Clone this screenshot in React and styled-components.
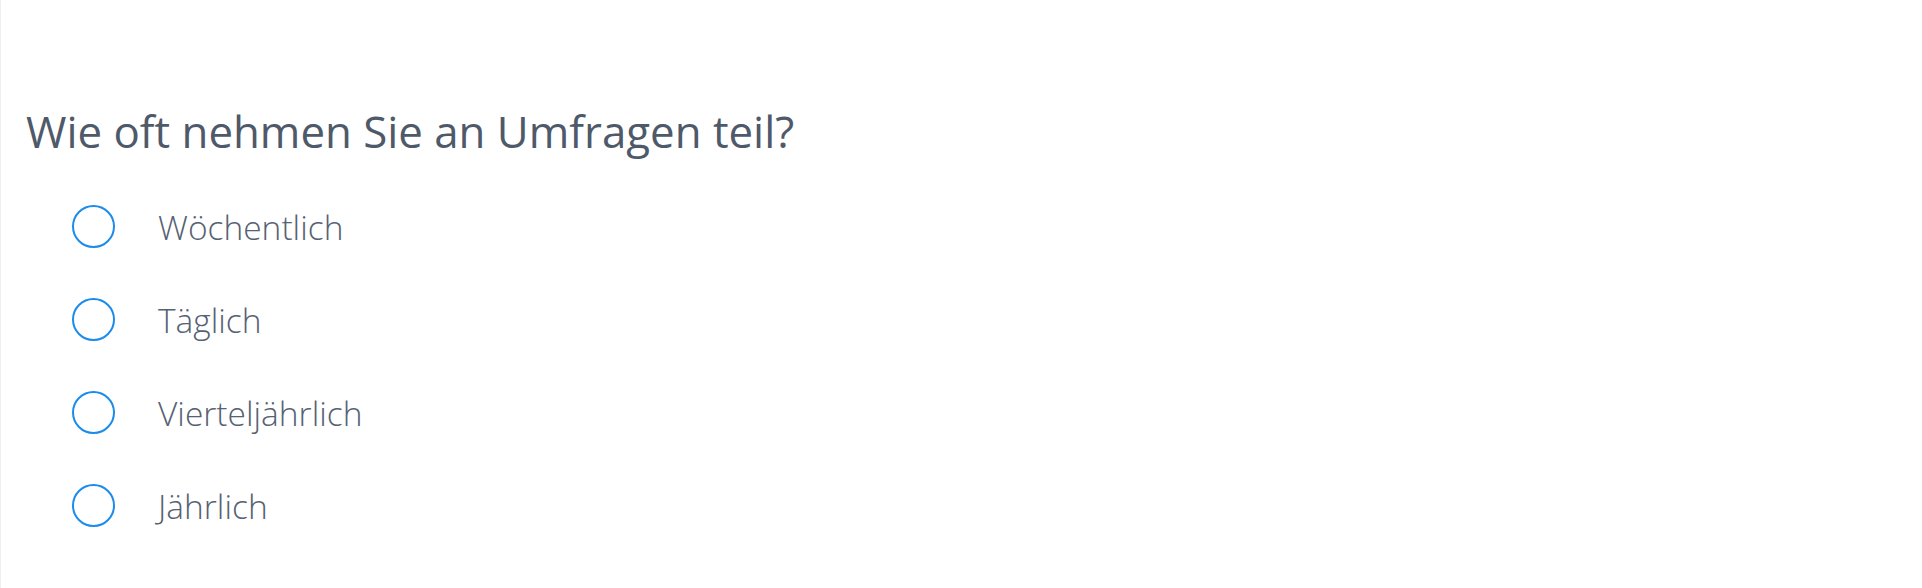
import React from 'react';
import styled, { createGlobalStyle } from 'styled-components';

const GlobalStyle = createGlobalStyle`
  html, body {
    margin: 0;
    padding: 0;
    background: #ffffff;
  }
  body {
    font-family: "Open Sans", "Noto Sans", sans-serif;
  }
`;

const Page = styled.div`
  height: 588px;
  box-sizing: border-box;
  border-left: 1px solid #efefef;
  padding: 105px 0 0 25px;
`;

const Question = styled.fieldset`
  border: 0;
  margin: 0;
  padding: 0;
`;

const Title = styled.legend`
  padding: 0;
  margin: 0 0 23px;
  font-size: 43.8px;
  line-height: 52px;
  font-weight: 400;
  color: #4e5969;
`;

const OptionList = styled.div`
  display: flex;
  flex-direction: column;
  padding-left: 46px;
`;

const Option = styled.label`
  display: flex;
  align-items: center;
  gap: 43px;
  height: 93px;
  cursor: pointer;

  input {
    position: absolute;
    opacity: 0;
    pointer-events: none;
  }
`;

const Circle = styled.span`
  width: 43px;
  height: 43px;
  box-sizing: border-box;
  border-radius: 50%;
  border: 2px solid #1b8bec;
  flex-shrink: 0;
`;

const OptionText = styled.span`
  font-size: 33.5px;
  font-weight: 300;
  color: #566173;
`;

const options = ['Wöchentlich', 'Täglich', 'Vierteljährlich', 'Jährlich'];

export default function App() {
  return (
    <>
      <GlobalStyle />
      <Page>
        <Question>
          <Title>Wie oft nehmen Sie an Umfragen teil?</Title>
          <OptionList>
            {options.map((o) => (
              <Option key={o}>
                <input type="radio" name="frequency" value={o} />
                <Circle />
                <OptionText>{o}</OptionText>
              </Option>
            ))}
          </OptionList>
        </Question>
      </Page>
    </>
  );
}
